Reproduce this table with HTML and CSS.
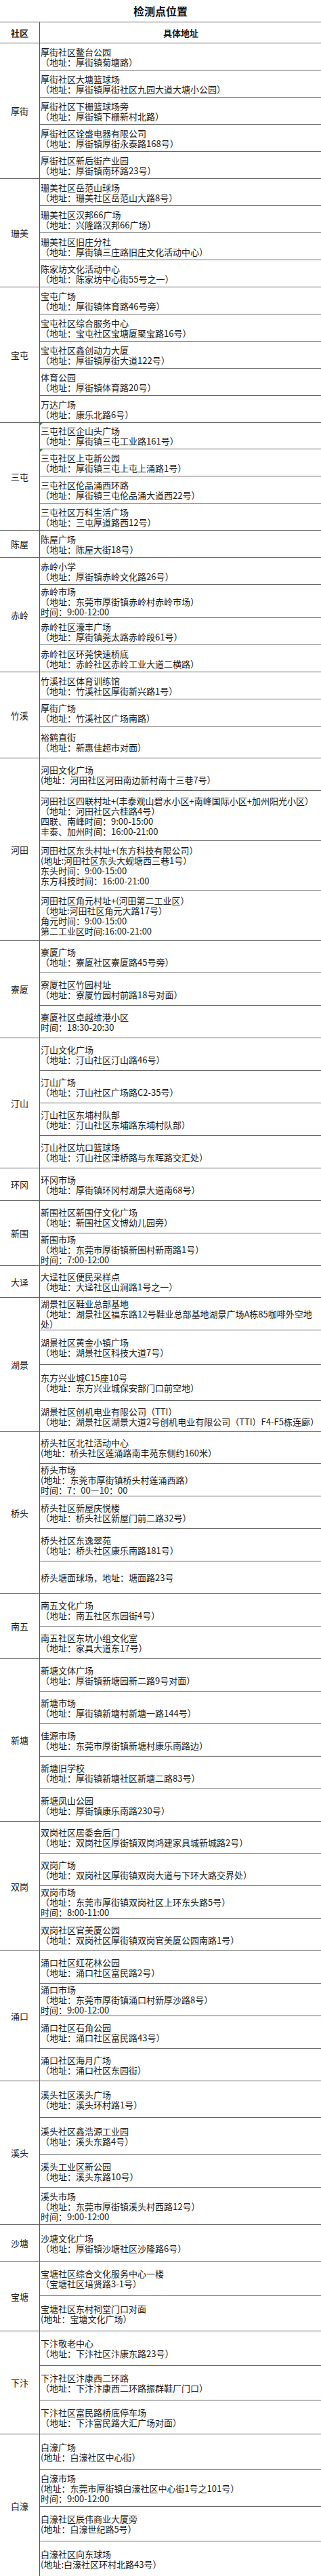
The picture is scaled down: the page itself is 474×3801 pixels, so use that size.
FILE: index.html
```html
<!DOCTYPE html>
<html lang="zh-CN">
<head>
<meta charset="utf-8">
<title>检测点位置</title>
<link rel="stylesheet" href="styles.css">
</head>
<body>
<h1 class="title">检测点位置</h1>
<div class="sheet">
  <div class="group head">
    <div class="name">社区</div>
    <div class="items"><div class="item h31">具体地址</div></div>
  </div>

  <div class="group">
    <div class="name">厚街</div>
    <div class="items">
      <div class="item h40">厚街社区鳌台公园<br>（地址：厚街镇菊塘路）</div>
      <div class="item h40">厚街社区大塘篮球场<br>（地址：厚街镇厚街社区九园大道大塘小公园）</div>
      <div class="item h40">厚街社区下栅篮球场旁<br>（地址：厚街镇下栅新村北路）</div>
      <div class="item h40">厚街社区诠盛电器有限公司<br>（地址：厚街镇厚街永泰路168号）</div>
      <div class="item h40">厚街社区新后街产业园<br>（地址：厚街镇南环路23号）</div>
    </div>
  </div>

  <div class="group">
    <div class="name">珊美</div>
    <div class="items">
      <div class="item h40">珊美社区岳范山球场<br>（地址：珊美社区岳范山大路8号）</div>
      <div class="item h40">珊美社区汉邦66广场<br>（地址：兴隆路汉邦66广场）</div>
      <div class="item h40">珊美社区旧庄分社<br>（地址：厚街镇三庄路旧庄文化活动中心）</div>
      <div class="item h40">陈家坊文化活动中心<br>（地址：陈家坊中心街55号之一）</div>
    </div>
  </div>

  <div class="group">
    <div class="name">宝屯</div>
    <div class="items">
      <div class="item h40">宝屯广场<br>（地址：厚街镇体育路46号旁）</div>
      <div class="item h40">宝屯社区综合服务中心<br>（地址：宝屯社区宝塘厦聚宝路16号）</div>
      <div class="item h40">宝屯社区鑫创动力大厦<br>（地址：厚街镇厚街大道122号）</div>
      <div class="item h40">体育公园<br>（地址：厚街镇体育路20号）</div>
      <div class="item h40">万达广场<br>（地址：康乐北路6号）</div>
    </div>
  </div>

  <div class="group">
    <div class="name">三屯</div>
    <div class="items">
      <div class="item h39 mark">三屯社区企山头广场<br>（地址：厚街镇三屯工业路161号）</div>
      <div class="item h40 mark">三屯社区上屯新公园<br>（地址：厚街镇三屯上屯上涌路1号）</div>
      <div class="item h40">三屯社区伦品涌西环路<br>（地址：厚街镇三屯伦品涌大道西22号）</div>
      <div class="item h40">三屯社区万科生活广场<br>（地址：三屯厚道路西12号）</div>
    </div>
  </div>

  <div class="group">
    <div class="name">陈屋</div>
    <div class="items">
      <div class="item h40">陈屋广场<br>（地址：陈屋大街18号）</div>
    </div>
  </div>

  <div class="group">
    <div class="name">赤岭</div>
    <div class="items">
      <div class="item h40">赤岭小学<br>（地址：厚街镇赤岭文化路26号）</div>
      <div class="item h49">赤岭市场<br>（地址：东莞市厚街镇赤岭村赤岭市场）<br>时间：9:00-12:00</div>
      <div class="item h40">赤岭社区濠丰广场<br>（地址：厚街镇莞太路赤岭段61号）</div>
      <div class="item h40">赤岭社区环莞快速桥底<br>（地址：赤岭社区赤岭工业大道二横路）</div>
    </div>
  </div>

  <div class="group">
    <div class="name">竹溪</div>
    <div class="items">
      <div class="item h40">竹溪社区体育训练馆<br>（地址：竹溪社区厚街新兴路1号）</div>
      <div class="item h40">厚街广场<br>（地址：竹溪社区广场南路）</div>
      <div class="item h47">裕鹤直街<br>（地址：新惠佳超市对面）</div>
    </div>
  </div>

  <div class="group">
    <div class="name">河田</div>
    <div class="items">
      <div class="item h48">河田文化广场<br>(地址：河田社区河田南边新村南十三巷7号）</div>
      <div class="item h74">河田社区四联村址+(丰泰观山碧水小区+南峰国际小区+加州阳光小区）<br>（地址：河田社区六桂路4号）<br>四联、南峰时间：9:00-15:00<br>丰泰、加州时间：16:00-21:00</div>
      <div class="item h73">河田社区东头村址+(东方科技有限公司）<br>(地址:河田社区东头大蚬塘西三巷1号）<br>东头时间：9:00-15:00<br>东方科技时间：16:00-21:00</div>
      <div class="item h74">河田社区角元村址+(河田第二工业区）<br>（地址:河田社区角元大路17号）<br>角元时间：9:00-15:00<br>第二工业区时间:16:00-21:00</div>
    </div>
  </div>

  <div class="group">
    <div class="name">寮厦</div>
    <div class="items">
      <div class="item h48">寮厦广场<br>（地址：寮厦社区寮厦路45号旁）</div>
      <div class="item h48">寮厦社区竹园村址<br>（地址：寮厦竹园村前路18号对面）</div>
      <div class="item h48">寮厦社区卓越维港小区<br>时间：18:30-20:30</div>
    </div>
  </div>

  <div class="group">
    <div class="name">汀山</div>
    <div class="items">
      <div class="item h48">汀山文化广场<br>（地址：汀山社区汀山路46号）</div>
      <div class="item h48">汀山广场<br>（地址：汀山社区广场路C2-35号）</div>
      <div class="item h48">汀山社区东埔村队部<br>（地址：汀山社区东埔路东埔村队部）</div>
      <div class="item h48">汀山社区坑口篮球场<br>（地址：汀山社区津桥路与东晖路交汇处）</div>
    </div>
  </div>

  <div class="group">
    <div class="name">环冈</div>
    <div class="items">
      <div class="item h48">环冈市场<br>（地址：厚街镇环冈村湖景大道南68号）</div>
    </div>
  </div>

  <div class="group">
    <div class="name">新围</div>
    <div class="items">
      <div class="item h48">新围社区新围仔文化广场<br>（地址：新围社区文博幼儿园旁）</div>
      <div class="item h48">新围市场<br>（地址：东莞市厚街镇新围村新南路1号）<br>时间：7:00-12:00</div>
    </div>
  </div>

  <div class="group">
    <div class="name">大迳</div>
    <div class="items">
      <div class="item h47">大迳社区便民采样点<br>（地址：大迳社区山涧路1号之一）</div>
    </div>
  </div>

  <div class="group">
    <div class="name">湖景</div>
    <div class="items">
      <div class="item h48">湖景社区鞋业总部基地<br>（地址：湖景社区福东路12号鞋业总部基地湖景广场A栋85咖啡外空地<br>处）</div>
      <div class="item h51">湖景社区黄金小镇广场<br>（地址：湖景社区科技大道7号）</div>
      <div class="item h53">东方兴业城C15座10号<br>（地址：东方兴业城保安部门口前空地）</div>
      <div class="item h46">湖景社区创机电业有限公司（TTI）<br>（地址：湖景社区湖景大道2号创机电业有限公司（TTI）F4-F5栋连廊）</div>
    </div>
  </div>

  <div class="group">
    <div class="name">桥头</div>
    <div class="items">
      <div class="item h47">桥头社区北社活动中心<br>(地址：桥头社区莲涌路南丰苑东侧约160米）</div>
      <div class="item h48">桥头市场<br>(地址：东莞市厚街镇桥头村莲涌西路）<br>时间：7：00—10：00</div>
      <div class="item h48">桥头社区新屋庆悦楼<br>（地址：桥头社区新屋门前二路32号）</div>
      <div class="item h48">桥头社区东逸翠苑<br>（地址：桥头社区康乐南路181号）</div>
      <div class="item h48">桥头塘面球场，地址：塘面路23号</div>
    </div>
  </div>

  <div class="group">
    <div class="name">南五</div>
    <div class="items">
      <div class="item h48">南五文化广场<br>（地址：南五社区东园街4号）</div>
      <div class="item h48">南五社区东坑小组文化室<br>（地址：家具大道东17号）</div>
    </div>
  </div>

  <div class="group">
    <div class="name">新塘</div>
    <div class="items">
      <div class="item h48">新塘文体广场<br>（地址：厚街镇新塘园新二路9号对面）</div>
      <div class="item h48">新塘市场<br>（地址：厚街镇新塘村新塘一路144号）</div>
      <div class="item h48">佳源市场<br>（地址：东莞市厚街镇新塘村康乐南路边）</div>
      <div class="item h48">新塘旧学校<br>（地址：厚街镇新塘社区新塘二路83号）</div>
      <div class="item h48">新塘凤山公园<br>（地址：厚街镇康乐南路230号）</div>
    </div>
  </div>

  <div class="group">
    <div class="name">双岗</div>
    <div class="items">
      <div class="item h47">双岗社区居委会后门<br>（地址：双岗社区厚街镇双岗鸿建家具城新城路2号）</div>
      <div class="item h48">双岗广场<br>（地址：双岗社区厚街镇双岗大道与下环大路交界处）</div>
      <div class="item h48">双岗市场<br>（地址：东莞市厚街镇双岗社区上环东头路5号）<br>时间：8:00-11:00</div>
      <div class="item h48">双岗社区官美厦公园<br>（地址：双岗社区厚街镇双岗官美厦公园南路1号）</div>
    </div>
  </div>

  <div class="group">
    <div class="name">涌口</div>
    <div class="items">
      <div class="item h48">涌口社区红花林公园<br>（地址：涌口社区富民路2号）</div>
      <div class="item h48">涌口市场<br>（地址：东莞市厚街镇涌口村新厚沙路8号）<br>时间：9:00-12:00</div>
      <div class="item h48">涌口社区石角公园<br>（地址：涌口社区富民路43号）</div>
      <div class="item h48">涌口社区海月广场<br>（地址：涌口社区东园街）</div>
    </div>
  </div>

  <div class="group">
    <div class="name">溪头</div>
    <div class="items">
      <div class="item h54">溪头社区溪头广场<br>（地址：溪头环村路1号）</div>
      <div class="item h55">溪头社区鑫浩源工业园<br>（地址：溪头东路4号）</div>
      <div class="item h48">溪头工业区新公园<br>（地址：溪头东路10号）</div>
      <div class="item h55">溪头市场<br>（地址：东莞市厚街镇溪头村西路12号）<br>时间：9:00-12:00</div>
    </div>
  </div>

  <div class="group">
    <div class="name">沙塘</div>
    <div class="items">
      <div class="item h54">沙塘文化广场<br>（地址：厚街镇沙塘社区沙隆路6号）</div>
    </div>
  </div>

  <div class="group">
    <div class="name">宝塘</div>
    <div class="items">
      <div class="item h51">宝塘社区综合文化服务中心一楼<br>（宝塘社区培贤路3-1号）</div>
      <div class="item h52">宝塘社区东村祠堂门口对面<br>(地址：宝塘文化广场）</div>
    </div>
  </div>

  <div class="group">
    <div class="name">下汴</div>
    <div class="items">
      <div class="item h51">下汴敬老中心<br>（地址：下汴社区汴康东路23号）</div>
      <div class="item h51">下汴社区汴康西二环路<br>（地址：下汴汴康西二环路振群鞋厂门口）</div>
      <div class="item h50">下汴社区富民路桥底停车场<br>（地址：下汴富民路大汇广场对面）</div>
    </div>
  </div>

  <div class="group last">
    <div class="name">白濠</div>
    <div class="items">
      <div class="item h52">白濠广场<br>(地址：白濠社区中心街）</div>
      <div class="item h55">白濠市场<br>(地址：东莞市厚街镇白濠社区中心街1号之101号）<br>时间：9:00-12:00</div>
      <div class="item h51">白濠社区辰伟商业大厦旁<br>(地址：白濠世纪路5号）</div>
      <div class="item h52">白濠社区向东球场<br>(地址:白濠社区环村北路43号）</div>
    </div>
  </div>
</div>
</body>
</html>
```

FILE: styles.css
```css
html, body {
  margin: 0;
  padding: 0;
  background: #ffffff;
}

body {
  color: #1a1a1a;
  font-family: "Noto Sans CJK SC", "Noto Sans", sans-serif;
  font-size: 13px;
  line-height: 15px;
  width: 474px;
  overflow: hidden;
}

.title {
  margin: 0;
  height: 32px;
  line-height: 32px;
  text-align: center;
  font-size: 16px;
  font-weight: 700;
  color: #111;
}

.sheet {
  border-top: 1px solid #666;
}

.group {
  display: flex;
}

.name {
  flex: none;
  width: 59px;
  box-sizing: border-box;
  border-right: 1px solid #555;
  border-bottom: 1px solid #666;
  display: flex;
  align-items: center;
  justify-content: center;
}

.items {
  flex: 1;
  min-width: 0;
}

.item {
  position: relative;
  box-sizing: border-box;
  display: flex;
  align-items: center;
  padding-left: 1px;
  border-bottom: 1px solid #666;
  white-space: nowrap;
}

.head .name,
.head .item {
  font-weight: 700;
}

.head .item {
  justify-content: center;
}

.last .name,
.last .item:last-child {
  border-bottom: none;
}

.mark::before {
  content: "";
  position: absolute;
  left: 0;
  top: 0;
  border-top: 4px solid #1e8a2e;
  border-right: 4px solid transparent;
}

.h31 { height: 31px; }
.h39 { height: 39px; }
.h40 { height: 40px; }
.h46 { height: 46px; }
.h47 { height: 47px; }
.h48 { height: 48px; }
.h49 { height: 49px; }
.h50 { height: 50px; }
.h51 { height: 51px; }
.h52 { height: 52px; }
.h53 { height: 53px; }
.h54 { height: 54px; }
.h55 { height: 55px; }
.h73 { height: 73px; }
.h74 { height: 74px; }
```
